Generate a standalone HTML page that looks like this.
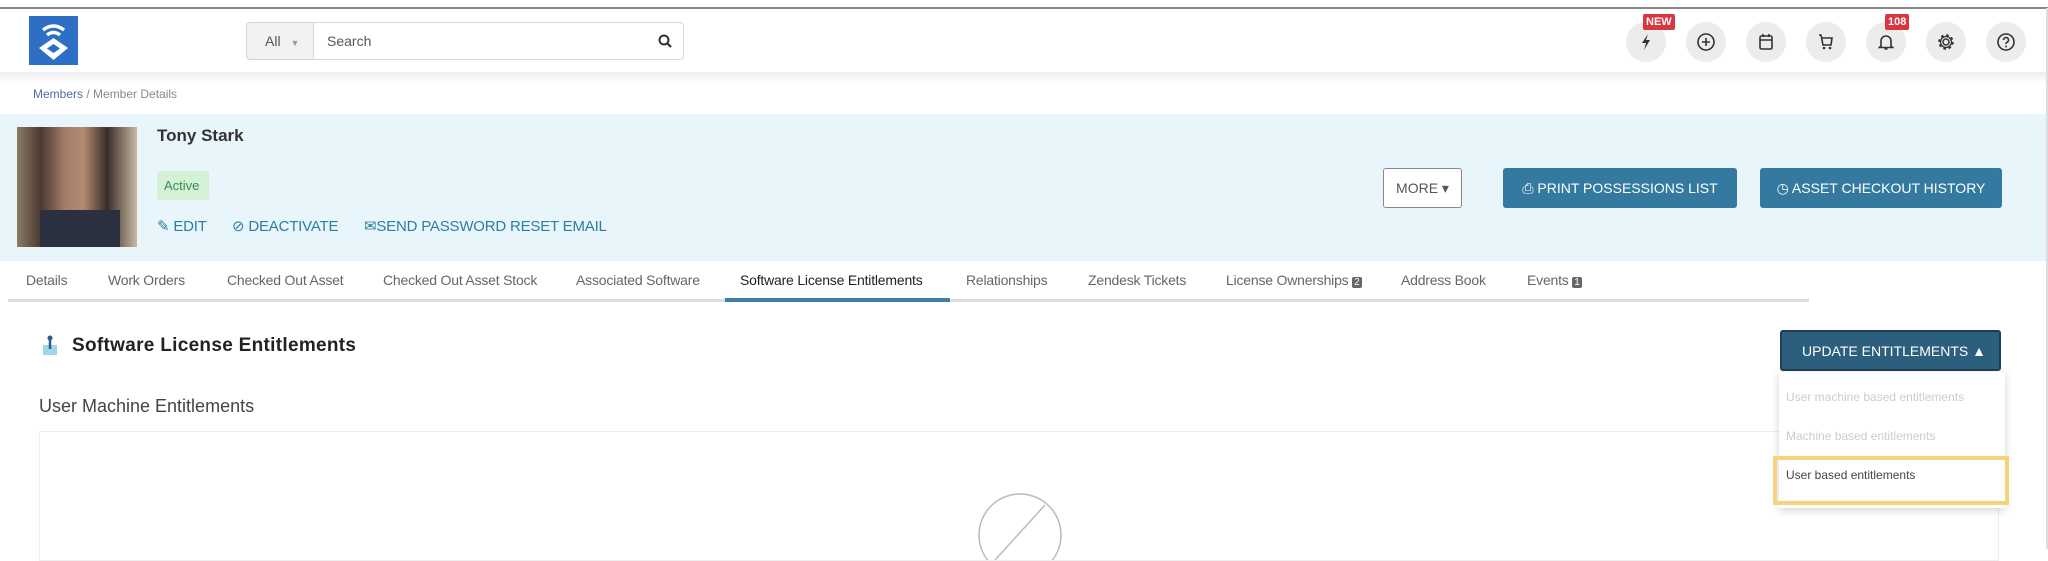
<!DOCTYPE html>
<html><head><meta charset="utf-8"><style>
*{box-sizing:border-box;margin:0;padding:0}
body{width:2048px;height:549px;overflow:hidden;background:#fff;font-family:"Liberation Sans",sans-serif;position:relative;color:#333}
.a{position:absolute}
.ic{position:absolute;width:40px;height:40px;border-radius:50%;background:#ececec;top:22px}
.ic svg{position:absolute;left:10px;top:10px}
.badge{position:absolute;background:#d9363e;color:#fff;font-size:11px;font-weight:bold;padding:2px 3px;border-radius:2px;top:14px}
.tab{position:absolute;top:272px;font-size:14px;color:#666;white-space:nowrap;letter-spacing:-0.2px}
.btn{position:absolute;top:168px;height:40px;border-radius:3px;background:#347aa0;color:#fff;font-size:14px;display:flex;align-items:center;justify-content:center;gap:6px}
.act{position:absolute;top:217px;font-size:15px;color:#2d7ea3;white-space:nowrap;letter-spacing:-0.2px}
.dd{position:absolute;left:1786px;font-size:12px;color:#ccc;white-space:nowrap}
</style></head><body>
<div class="a" style="left:0;top:7px;width:2048px;height:2px;background:#888"></div>
<div class="a" style="right:0;top:8px;width:2px;height:541px;background:#ddd"></div>
<div class="a" style="left:0;top:72px;width:2046px;height:12px;background:linear-gradient(#eee,#fff)"></div>
<svg class="a" style="left:29px;top:16px" width="49" height="49" viewBox="0 0 49 49"><rect width="49" height="49" fill="#2d6fc4"/>
<path d="M14 14 Q24.5 6 35 14" stroke="#fff" stroke-width="3.5" fill="none"/><path d="M18 19 Q24.5 14 31 19" stroke="#fff" stroke-width="3.5" fill="none"/>
<path d="M24.5 22 L39 32 L24.5 44 L10 32 Z" fill="#fff"/><path d="M24.5 28 L31 32.5 L24.5 37 L18 32.5Z" fill="#2d6fc4"/></svg>
<div class="a" style="left:246px;top:22px;width:438px;height:38px;border:1px solid #d6d6d6;border-radius:4px;background:#fff"></div>
<div class="a" style="left:246px;top:22px;width:68px;height:38px;border:1px solid #d6d6d6;border-radius:4px 0 0 4px;background:#f2f2f2;font-size:14px;color:#555;padding:10px 0 0 18px">All <span style="font-size:9px;color:#999;margin-left:6px">▼</span></div>
<div class="a" style="left:327px;top:33px;font-size:14px;color:#555">Search</div>
<svg class="a" style="left:658px;top:34px" width="14" height="14" viewBox="0 0 14 14"><circle cx="6" cy="6" r="4.5" stroke="#333" stroke-width="2" fill="none"/><path d="M9.5 9.5 L13 13" stroke="#333" stroke-width="2.2"/></svg>
<div class="ic" style="left:1626px"><svg width="20" height="20" viewBox="0 0 20 20"><path d="M12 2 L6 11 H10 L8 18 L14 8 H10 Z" fill="#333"/></svg></div>
<div class="ic" style="left:1686px"><svg width="20" height="20" viewBox="0 0 20 20"><circle cx="10" cy="10" r="8" stroke="#333" stroke-width="1.6" fill="none"/><path d="M10 6v8M6 10h8" stroke="#333" stroke-width="1.6"/></svg></div>
<div class="ic" style="left:1746px"><svg width="20" height="20" viewBox="0 0 20 20"><rect x="4" y="4" width="12" height="13" rx="1.5" stroke="#333" stroke-width="1.6" fill="none"/><path d="M4 8h12M7 2v3M13 2v3" stroke="#333" stroke-width="1.6"/></svg></div>
<div class="ic" style="left:1806px"><svg width="20" height="20" viewBox="0 0 20 20"><path d="M3 3h2l2 10h8l1-7H6" stroke="#333" stroke-width="1.6" fill="none"/><circle cx="8" cy="16" r="1.3" fill="#333"/><circle cx="14" cy="16" r="1.3" fill="#333"/></svg></div>
<div class="ic" style="left:1866px"><svg width="20" height="20" viewBox="0 0 20 20"><path d="M5 14V9a5 5 0 0 1 10 0v5l1.5 1.5h-13Z M8.5 17h3" stroke="#333" stroke-width="1.6" fill="none"/></svg></div>
<div class="ic" style="left:1926px"><svg width="20" height="20" viewBox="0 0 20 20"><circle cx="10" cy="10" r="3" stroke="#333" stroke-width="1.5" fill="none"/><circle cx="10" cy="10" r="6.5" stroke="#333" stroke-width="2.5" stroke-dasharray="2.5 2.6" fill="none"/><circle cx="10" cy="10" r="5.5" stroke="#333" stroke-width="1.3" fill="none"/></svg></div>
<div class="ic" style="left:1986px"><svg width="20" height="20" viewBox="0 0 20 20"><circle cx="10" cy="10" r="8" stroke="#333" stroke-width="1.6" fill="none"/><path d="M7.5 8a2.5 2.5 0 1 1 3.5 2.3c-.8.4-1 1-1 1.8" stroke="#333" stroke-width="1.6" fill="none"/><circle cx="10" cy="14.5" r="1" fill="#333"/></svg></div>
<div class="badge" style="left:1643px">NEW</div>
<div class="badge" style="left:1885px">108</div>
<div class="a" style="left:33px;top:87px;font-size:12px;color:#888"><span style="color:#4a6fa0">Members</span> / Member Details</div>
<div class="a" style="left:0;top:114px;width:2046px;height:147px;background:#e8f5fa"></div>
<div class="a" style="left:17px;top:127px;width:120px;height:120px;background:linear-gradient(90deg,#8a7a66 0%,#4a3a30 20%,#a37d6a 40%,#b58a72 55%,#3a2e2a 75%,#c9b7a0 100%)"></div>
<div class="a" style="left:40px;top:210px;width:80px;height:37px;background:#2a3040"></div>
<div class="a" style="left:157px;top:126px;font-size:17px;font-weight:bold;color:#333">Tony Stark</div>
<div class="a" style="left:157px;top:171px;width:52px;height:29px;background:#d4f1d8;border-radius:2px;font-size:13px;color:#3a8a4a;padding:7px 0 0 7px">Active</div>
<div class="act" style="left:157px">✎ EDIT</div>
<div class="act" style="left:232px">⊘ DEACTIVATE</div>
<div class="act" style="left:364px">✉SEND PASSWORD RESET EMAIL</div>
<div class="btn" style="left:1383px;width:79px;background:#fff;border:1px solid #888;color:#555;font-size:14px">MORE ▾</div>
<div class="btn" style="left:1503px;width:234px">⎙ PRINT POSSESSIONS LIST</div>
<div class="btn" style="left:1760px;width:242px">◷ ASSET CHECKOUT HISTORY</div>
<div class="a" style="left:8px;top:299px;width:1801px;height:3px;background:#ddd"></div>
<div class="a" style="left:725px;top:298px;width:225px;height:4px;background:#3c7ea6"></div>
<div class="tab" style="left:26px">Details</div>
<div class="tab" style="left:108px">Work Orders</div>
<div class="tab" style="left:227px">Checked Out Asset</div>
<div class="tab" style="left:383px">Checked Out Asset Stock</div>
<div class="tab" style="left:576px">Associated Software</div>
<div class="tab" style="left:740px;color:#222">Software License Entitlements</div>
<div class="tab" style="left:966px">Relationships</div>
<div class="tab" style="left:1088px">Zendesk Tickets</div>
<div class="tab" style="left:1226px">License Ownerships <span style="background:#666;color:#fff;font-size:10px;padding:0 2px;border-radius:2px">2</span></div>
<div class="tab" style="left:1401px">Address Book</div>
<div class="tab" style="left:1527px">Events <span style="background:#666;color:#fff;font-size:10px;padding:0 2px;border-radius:2px">1</span></div>
<svg class="a" style="left:40px;top:335px" width="20" height="20" viewBox="0 0 20 20"><rect x="3" y="10" width="14" height="10" fill="#9fd6ea"/><circle cx="10" cy="3" r="2.5" fill="#2d5c8a"/><path d="M10 5v9" stroke="#2d5c8a" stroke-width="2.5"/></svg>
<div class="a" style="left:72px;top:335px;font-size:19px;font-weight:bold;color:#222;letter-spacing:0.3px">Software License Entitlements</div>
<div class="a" style="left:39px;top:396px;font-size:18px;color:#444">User Machine Entitlements</div>
<div class="a" style="left:39px;top:431px;width:1960px;height:130px;border:1px solid #eee"></div>
<svg class="a" style="left:975px;top:490px" width="90" height="70" viewBox="0 0 90 70"><circle cx="45" cy="45" r="41" stroke="#bbb" stroke-width="1.5" fill="none"/><path d="M20 70 L70 15" stroke="#bbb" stroke-width="1.5"/></svg>
<div class="a" style="left:1779px;top:372px;width:226px;height:136px;background:#fff;box-shadow:0 2px 8px rgba(0,0,0,.18)"></div>
<div class="a" style="left:1780px;top:330px;width:221px;height:41px;background:#2b5f7d;border:2px solid #1d3f55;border-radius:3px;color:#fff;font-size:14px;padding:11px 0 0 20px">UPDATE ENTITLEMENTS ▲</div>
<div class="dd" style="top:390px">User machine based entitlements</div>
<div class="dd" style="top:429px">Machine based entitlements</div>
<div class="a" style="left:1773px;top:456px;width:236px;height:49px;border:4px solid #f5d37a"></div>
<div class="dd" style="top:468px;color:#444">User based entitlements</div>
</body></html>
